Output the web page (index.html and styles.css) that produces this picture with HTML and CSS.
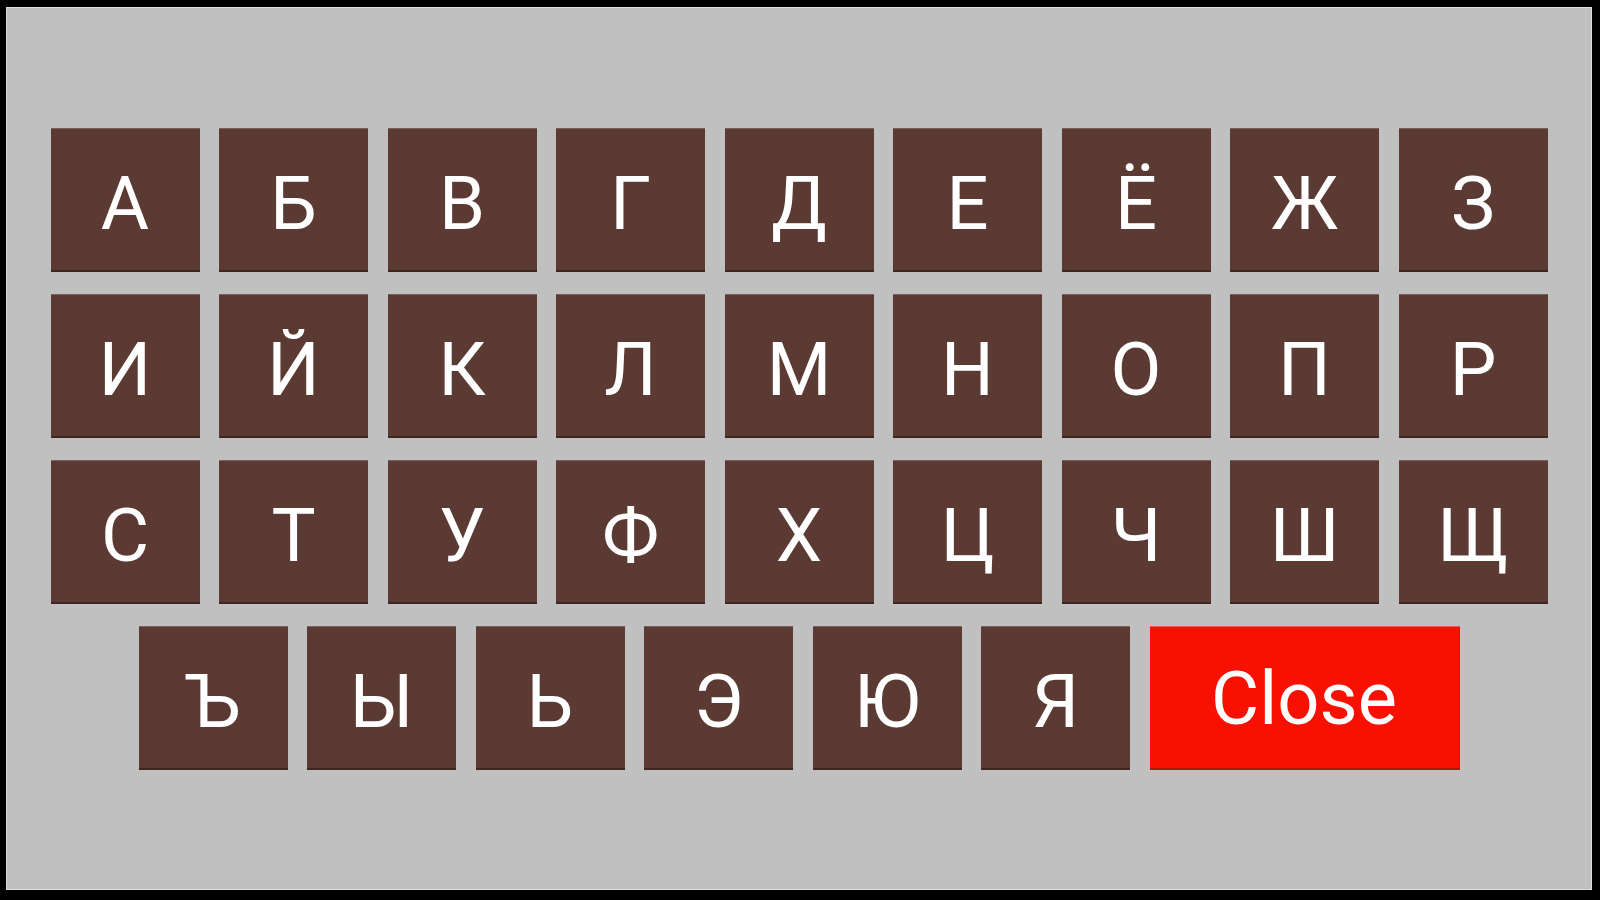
FILE: index.html
```html
<!DOCTYPE html>
<html lang="ru">
<head>
<meta charset="utf-8">
<title>Клавиатура</title>
<link rel="stylesheet" href="styles.css">
</head>
<body>
<div class="panel">
  <div class="keyboard">
    <div class="row">
      <button class="key">А</button>
      <button class="key">Б</button>
      <button class="key">В</button>
      <button class="key">Г</button>
      <button class="key">Д</button>
      <button class="key">Е</button>
      <button class="key">Ё</button>
      <button class="key">Ж</button>
      <button class="key">З</button>
    </div>
    <div class="row">
      <button class="key">И</button>
      <button class="key">Й</button>
      <button class="key">К</button>
      <button class="key">Л</button>
      <button class="key">М</button>
      <button class="key">Н</button>
      <button class="key">О</button>
      <button class="key">П</button>
      <button class="key">Р</button>
    </div>
    <div class="row">
      <button class="key">С</button>
      <button class="key">Т</button>
      <button class="key">У</button>
      <button class="key">Ф</button>
      <button class="key">Х</button>
      <button class="key">Ц</button>
      <button class="key">Ч</button>
      <button class="key">Ш</button>
      <button class="key">Щ</button>
    </div>
    <div class="row">
      <button class="key">Ъ</button>
      <button class="key">Ы</button>
      <button class="key">Ь</button>
      <button class="key">Э</button>
      <button class="key">Ю</button>
      <button class="key">Я</button>
      <button class="key close">Close</button>
    </div>
  </div>
</div>
</body>
</html>
```

FILE: styles.css
```css
html, body {
  margin: 0;
  padding: 0;
  height: 100%;
  background: #000;
}

body {
  display: flex;
  box-sizing: border-box;
  padding: 7px 8px 10px 6px;
}

.panel {
  flex: 1;
  display: flex;
  align-items: center;
  justify-content: center;
  background: #c0c0c0;
  border: 1px solid #dcdcdc;
}

.keyboard {
  display: flex;
  flex-direction: column;
  gap: 22px;
}

.row {
  display: flex;
  justify-content: center;
  gap: 19.5px;
}

.key {
  box-sizing: border-box;
  width: 149px;
  height: 144px;
  margin: 0;
  padding: 9px 0 0;
  border: none;
  border-top: 1px solid #7a625c;
  border-bottom: 2px solid #3e2621;
  background: #5b3a33;
  color: #fff;
  font-family: Roboto, "Noto Sans", sans-serif;
  font-size: 74px;
  line-height: 1;
  display: flex;
  align-items: center;
  justify-content: center;
}

.key.close {
  width: 310px;
  padding-top: 4px;
  background: #f81000;
  border-top: 1px solid #ff5a4a;
  border-bottom: 2px solid #a8180c;
  border-right: 1px solid #b8200f;
  font-size: 74px;
}
```
